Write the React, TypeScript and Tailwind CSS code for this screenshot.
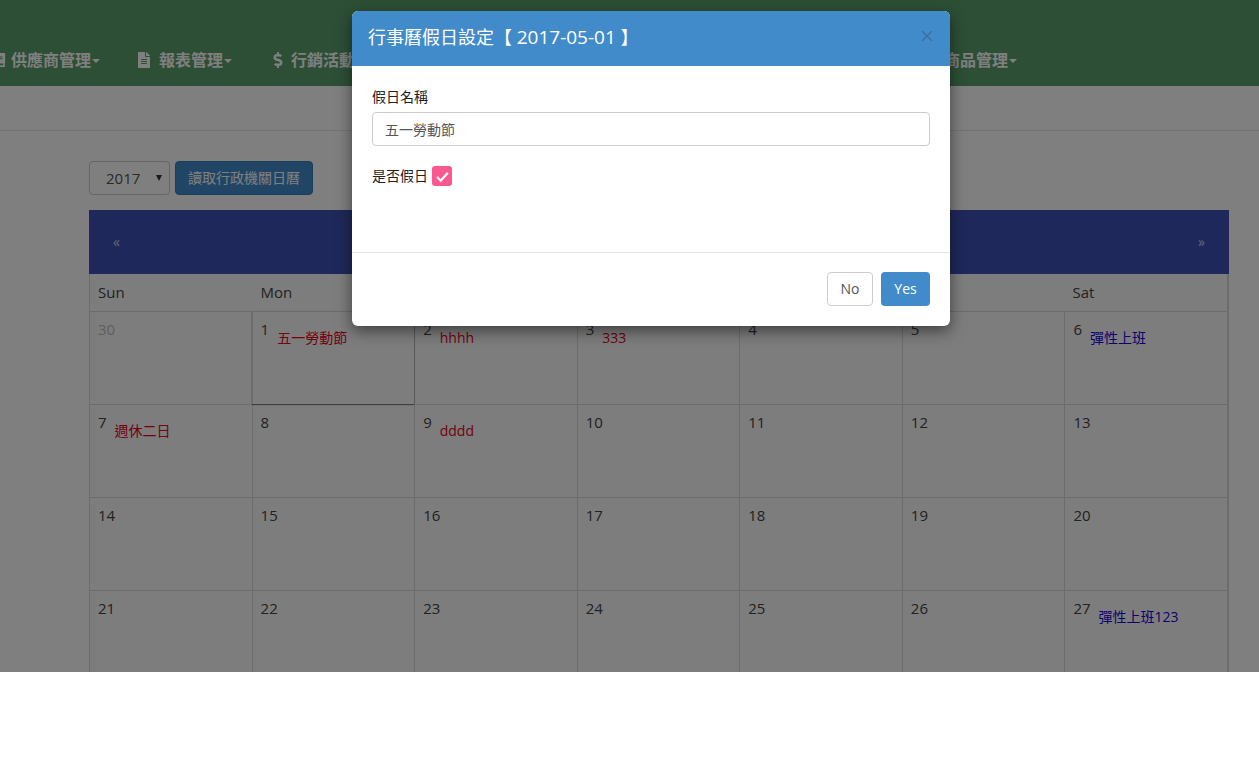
import { FaBook, FaDollarSign, FaFileAlt } from "react-icons/fa";

const FONT = "font-['Open_Sans','Noto_Sans_CJK_TC',sans-serif]";

type Cell = { day: number; label?: string; tone?: "red" | "blue"; muted?: boolean; picked?: boolean };

const weekDays = ["Sun", "Mon", "Tue", "Wed", "Thu", "Fri", "Sat"];

const cells: Cell[] = [
  { day: 30, muted: true },
  { day: 1, label: "五一勞動節", tone: "red", picked: true },
  { day: 2, label: "hhhh", tone: "red" },
  { day: 3, label: "333", tone: "red" },
  { day: 4 },
  { day: 5 },
  { day: 6, label: "彈性上班", tone: "blue" },
  { day: 7, label: "週休二日", tone: "red" },
  { day: 8 },
  { day: 9, label: "dddd", tone: "red" },
  { day: 10 },
  { day: 11 },
  { day: 12 },
  { day: 13 },
  { day: 14 },
  { day: 15 },
  { day: 16 },
  { day: 17 },
  { day: 18 },
  { day: 19 },
  { day: 20 },
  { day: 21 },
  { day: 22 },
  { day: 23 },
  { day: 24 },
  { day: 25 },
  { day: 26 },
  { day: 27, label: "彈性上班123", tone: "blue" },
];

function Caret() {
  return <span className="ml-[1px] mt-[2px] inline-block h-0 w-0 border-x-[4px] border-t-[4px] border-x-transparent border-t-white" />;
}

function DayCell({ cell }: { cell: Cell }) {
  return (
    <div
      className={
        "relative h-[93px] border-t border-l border-[#d9d9d9] bg-[#fafafa] pl-2 pt-[6px] text-[15px] leading-[22px] " +
        (cell.picked ? "z-10 shadow-[0_1px_1px_rgba(0,0,0,0.4),1px_0_1px_rgba(0,0,0,0.1),-1px_0_1px_rgba(0,0,0,0.06)] " : "") +
        (cell.muted ? "text-[#bdbdbd]" : "text-[#444]")
      }
    >
      <span className="align-top">{cell.day}</span>
      {cell.label && (
        <span
          className={
            "relative top-[9px] ml-2 align-top text-sm leading-[22px] " +
            (cell.tone === "red" ? "text-[#e8001c]" : "text-[#1a00e0]")
          }
        >
          {cell.label}
        </span>
      )}
    </div>
  );
}

export default function App() {
  return (
    <div className={"relative h-[763px] w-[1259px] overflow-hidden bg-white " + FONT}>
      {/* page behind the modal */}
      <div className="h-[672px] overflow-hidden bg-white">
        <nav className="flex h-[86px] items-end bg-[#5a9e6c] pb-[15px] text-base font-semibold leading-[22px] text-white">
          <ul className="flex items-center whitespace-nowrap">
            <li className="-ml-[8px] flex items-center">
              <FaBook className="mr-[5px] h-[14px] w-[14px]" />
              供應商管理
              <Caret />
            </li>
            <li className="ml-[37px] flex items-center">
              <FaFileAlt className="mr-2 h-4 w-[14px]" />
              報表管理
              <Caret />
            </li>
            <li className="ml-[40px] flex items-center">
              <FaDollarSign className="mr-[7px] h-4 w-3" />
              行銷活動管理
              <Caret />
            </li>
            <li className="ml-[548px] flex items-center">
              商品管理
              <Caret />
            </li>
          </ul>
        </nav>

        <div className="h-[45px] border-b border-[#e7e7e7]" />

        <div className="pl-[89px] pr-[30px] pt-[30px]">
          <div className="flex h-[34px] gap-[5px]">
            <div className="flex w-[81px] items-center justify-between rounded border border-[#ccc] pl-[16px] pr-[7px] text-[15px] text-[#555]">
              <span>2017</span>
              <span className="h-0 w-0 border-x-[3px] border-t-[6px] border-x-transparent border-t-[#333]" />
            </div>
            <button className="w-[138px] rounded border border-[#357ebd] bg-[#428bca] text-sm text-white">讀取行政機關日曆</button>
          </div>

          <div className="mt-[15px] flex h-[64px] items-center justify-between bg-[#3f51b5] px-6 text-sm text-[#c8cbe8]">
            <span>«</span>
            <span>»</span>
          </div>

          <div className="border-r-2 border-[#d9d9d9] text-[#444]">
            <div className="grid h-[37px] grid-cols-7 items-center border-l border-[#d9d9d9] bg-[#fbfbfb] text-[15px]">
              {weekDays.map((d) => (
                <div key={d} className="pl-2">
                  {d}
                </div>
              ))}
            </div>
            <div className="grid grid-cols-7">
              {cells.map((c) => (
                <DayCell key={c.day} cell={c} />
              ))}
            </div>
          </div>
        </div>
      </div>

      {/* backdrop */}
      <div className="absolute left-0 right-0 top-0 z-20 h-[672px] bg-black/50" />

      {/* modal */}
      <div className="absolute left-[352px] top-[11px] z-30 w-[598px] overflow-hidden rounded-md bg-white shadow-[0_5px_15px_rgba(0,0,0,0.5)]">
        <div className="flex h-[55px] items-center justify-between bg-[#428bca] pl-4 pr-[17px] pb-[1px] text-white">
          <h4 className="text-lg">
            行事曆假日設定【 <span className="text-[19px]">2017-05-01</span> 】
          </h4>
          <svg viewBox="0 0 12 12" className="mb-[4px] h-3 w-3" fill="none" stroke="#3a6d99" strokeWidth="1.2">
            <path d="M1 1 11 11M11 1 1 11" />
          </svg>
        </div>
        <div className="h-[186px] px-5 pt-[21px]">
          <label className="block text-sm leading-[20px] text-[#222]">假日名稱</label>
          <input
            readOnly
            value="五一勞動節"
            className="mt-[5px] block h-[34px] w-full rounded border border-[#ccc] px-3 text-sm text-[#555]"
          />
          <div className="mt-[20px] flex items-center gap-1 text-sm text-[#222]">
            是否假日
            <span className="flex h-5 w-5 items-center justify-center rounded-[3px] bg-[#f9598f]">
              <svg viewBox="0 0 14 14" className="h-[15px] w-[15px]" fill="none" stroke="white" strokeWidth="2">
                <path d="M2 7.5 5.4 11 12 3.5" />
              </svg>
            </span>
          </div>
        </div>
        <div className="flex h-[74px] items-start justify-end gap-2 border-t border-[#e5e5e5] pr-5 pt-[19px]">
          <button className="h-[34px] w-[46px] rounded border border-[#ccc] text-sm text-[#555]">No</button>
          <button className="h-[34px] w-[49px] rounded bg-[#428bca] text-sm text-white">Yes</button>
        </div>
      </div>
    </div>
  );
}
